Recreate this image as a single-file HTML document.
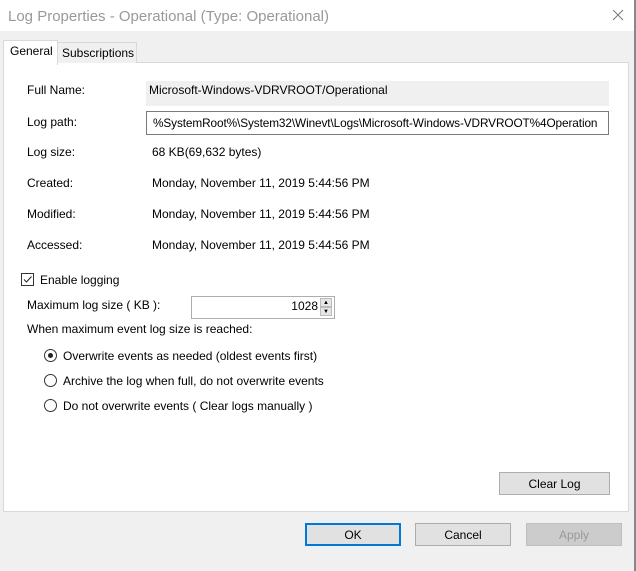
<html><head><style>
body{margin:0;width:636px;height:571px;background:#f0f0f0;font-family:"Liberation Sans",sans-serif;font-size:12px;color:#000;position:relative;overflow:hidden}
.a{position:absolute;white-space:nowrap}
.btn{position:absolute;background:#e1e1e1;border:1px solid #adadad;box-sizing:border-box;text-align:center;line-height:23px}
.radio{position:absolute;width:11px;height:11px;border:1px solid #333;border-radius:50%;background:#fff}
</style></head><body>
<div class="a" style="left:0;top:0;width:634px;height:31px;background:#fff"></div>
<div class="a" style="left:8px;top:8px;font-size:15px;color:#999">Log Properties - Operational (Type: Operational)</div>
<svg class="a" style="left:612px;top:9px" width="12" height="12"><path d="M1 1L11 11M11 1L1 11" stroke="#777" stroke-width="1"/></svg>
<div class="a" style="left:634px;top:0;width:2px;height:571px;background:#888"></div>
<div class="a" style="left:3px;top:62px;width:624px;height:448px;background:#fff;border:1px solid #d9d9d9"></div>
<div class="a" style="left:57px;top:42px;width:78px;height:20px;background:#f0f0f0;border:1px solid #d9d9d9;border-bottom:none"></div>
<div class="a" style="left:62px;top:46px">Subscriptions</div>
<div class="a" style="left:3px;top:40px;width:53px;height:24px;background:#fff;border:1px solid #d9d9d9;border-bottom:none"></div>
<div class="a" style="left:10px;top:44px">General</div>
<div class="a" style="left:27px;top:83px">Full Name:</div>
<div class="a" style="left:146px;top:81px;width:463px;height:25px;background:#f0f0f0"></div>
<div class="a" style="left:149px;top:83px">Microsoft-Windows-VDRVROOT/Operational</div>
<div class="a" style="left:27px;top:115px">Log path:</div>
<div class="a" style="left:146px;top:111px;width:461px;height:22px;background:#fff;border:1px solid #7a7a7a;overflow:hidden"><span style="position:absolute;left:6px;top:4px;white-space:nowrap;letter-spacing:-0.1px;font-size:11.8px">%SystemRoot%\System32\Winevt\Logs\Microsoft-Windows-VDRVROOT%4Operation</span></div>
<div class="a" style="left:27px;top:145px">Log size:</div>
<div class="a" style="left:152px;top:145px">68 KB(69,632 bytes)</div>
<div class="a" style="left:27px;top:176px">Created:</div>
<div class="a" style="left:152px;top:176px">Monday, November 11, 2019 5:44:56 PM</div>
<div class="a" style="left:27px;top:207px">Modified:</div>
<div class="a" style="left:152px;top:207px">Monday, November 11, 2019 5:44:56 PM</div>
<div class="a" style="left:27px;top:238px">Accessed:</div>
<div class="a" style="left:152px;top:238px">Monday, November 11, 2019 5:44:56 PM</div>
<div class="a" style="left:21px;top:273px;width:11px;height:11px;border:1px solid #333;background:#fff"></div>
<svg class="a" style="left:22px;top:274px" width="11" height="11"><path d="M2 5.5L4.5 8L9.5 2.5" stroke="#222" fill="none"/></svg>
<div class="a" style="left:40px;top:273px">Enable logging</div>
<div class="a" style="left:27px;top:298px">Maximum log size ( KB ):</div>
<div class="a" style="left:191px;top:296px;width:142px;height:21px;background:#fff;border:1px solid #adadad"></div>
<div class="a" style="left:278px;top:299px;width:40px;text-align:right">1028</div>
<div class="a" style="left:320px;top:298px;width:12px;height:9px;background:#e6e6e6;border:1px solid #bbb;box-sizing:border-box;font-size:6px;text-align:center;line-height:8px">▲</div>
<div class="a" style="left:320px;top:307px;width:12px;height:9px;background:#e6e6e6;border:1px solid #bbb;box-sizing:border-box;font-size:6px;text-align:center;line-height:8px">▼</div>
<div class="a" style="left:27px;top:322px">When maximum event log size is reached:</div>
<div class="radio" style="left:44px;top:349px"><div style="position:absolute;left:3px;top:3px;width:5px;height:5px;border-radius:50%;background:#222"></div></div>
<div class="a" style="left:63px;top:349px">Overwrite events as needed (oldest events first)</div>
<div class="radio" style="left:44px;top:374px"></div>
<div class="a" style="left:63px;top:374px">Archive the log when full, do not overwrite events</div>
<div class="radio" style="left:44px;top:399px"></div>
<div class="a" style="left:63px;top:399px">Do not overwrite events ( Clear logs manually )</div>
<div class="btn" style="left:499px;top:472px;width:111px;height:23px">Clear Log</div>
<div class="btn" style="left:305px;top:523px;width:96px;height:23px;border:2px solid #0078d7;line-height:21px">OK</div>
<div class="btn" style="left:415px;top:523px;width:96px;height:23px">Cancel</div>
<div class="btn" style="left:526px;top:523px;width:96px;height:23px;background:#ccc;border-color:#bfbfbf;color:#999">Apply</div>
</body></html>
